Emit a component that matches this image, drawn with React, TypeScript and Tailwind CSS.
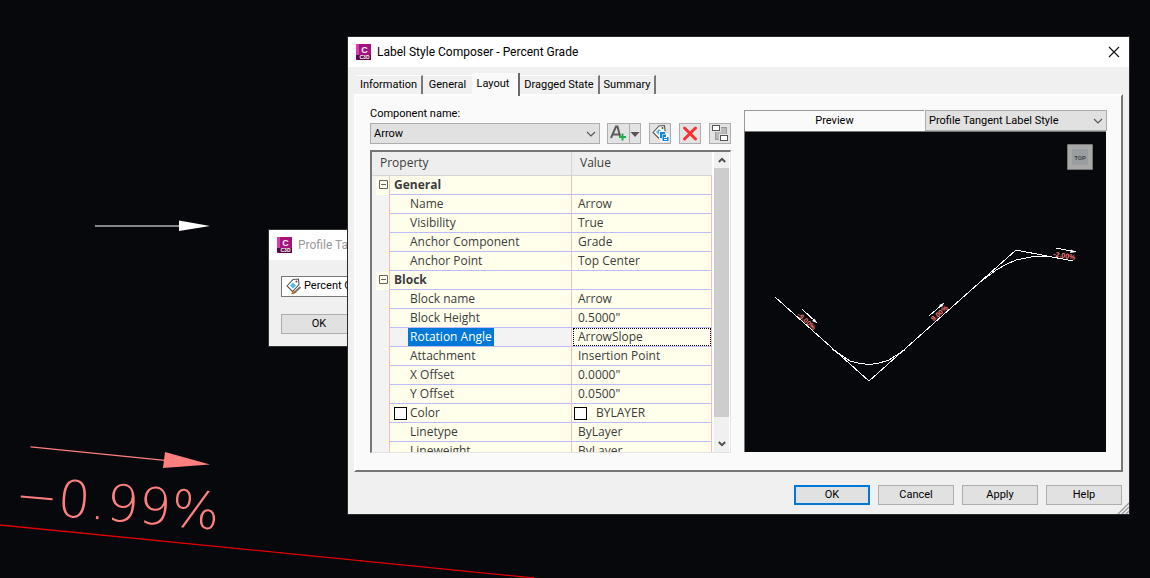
import type { ReactNode } from "react";

type Row = {
  name: string;
  value?: string;
  group?: boolean;
  swatch?: boolean;
  selected?: boolean;
};

const rows: Row[] = [
  { name: "General", group: true },
  { name: "Name", value: "Arrow" },
  { name: "Visibility", value: "True" },
  { name: "Anchor Component", value: "Grade" },
  { name: "Anchor Point", value: "Top Center" },
  { name: "Block", group: true },
  { name: "Block name", value: "Arrow" },
  { name: "Block Height", value: '0.5000"' },
  { name: "Rotation Angle", value: "ArrowSlope", selected: true },
  { name: "Attachment", value: "Insertion Point" },
  { name: "X Offset", value: '0.0000"' },
  { name: "Y Offset", value: '0.0500"' },
  { name: "Color", value: "BYLAYER", swatch: true },
  { name: "Linetype", value: "ByLayer" },
  { name: "Lineweight", value: "ByLayer" },
];

const tabs = [
  { label: "Information", width: "w-[67px]" },
  { label: "General", width: "w-[49px]" },
  { label: "Layout", width: "w-[48px]", active: true },
  { label: "Dragged State", width: "w-[80px]" },
  { label: "Summary", width: "w-[56px]" },
];

function AppIcon() {
  return (
    <svg width="16" height="16" viewBox="0 0 16 16" className="shrink-0" aria-hidden="true">
      <rect width="15" height="16" fill="#a8127d" />
      <path d="M0 0H3V11H0Z" fill="#d83cae" />
      <path d="M0 11H15V16H2L0 14Z" fill="#5f0546" />
      <text x="8.5" y="8.5" textAnchor="middle" fontFamily="Liberation Sans" fontSize="9" fontWeight="700" fill="#fff">C</text>
      <text x="8.5" y="15.2" textAnchor="middle" fontFamily="Liberation Sans" fontSize="5" fontWeight="700" fill="#fff">C3D</text>
    </svg>
  );
}

function Chevron() {
  return (
    <svg width="10" height="6" viewBox="0 0 10 6" className="pointer-events-none absolute right-1 top-2" aria-hidden="true">
      <path d="M1 1L5 5L9 1" fill="none" stroke="#555" strokeWidth="1.1" />
    </svg>
  );
}

function Combo({ label, id, value }: { label?: string; id: string; value: string }) {
  return (
    <div className="relative">
      <select
        id={id}
        aria-label={label}
        className="block h-[21px] w-full appearance-none border border-[#adadad] bg-[#e1e1e1] pl-[3px] pr-4 pt-px text-[11px] text-black"
      >
        <option>{value}</option>
      </select>
      <Chevron />
    </div>
  );
}

function ToolButton({ label, children, wide }: { label: string; children: ReactNode; wide?: boolean }) {
  return (
    <button
      aria-label={label}
      className={`flex h-[21px] items-center justify-center border border-[#adadad] bg-[#e3e3e3] ${wide ? "w-[34px]" : "w-[22px]"}`}
    >
      {children}
    </button>
  );
}

function PushButton({ children, primary }: { children: ReactNode; primary?: boolean }) {
  return (
    <button
      className={`flex h-5 w-[76px] items-center justify-center bg-[#e1e1e1] text-[11px] ${
        primary ? "border-2 border-[#0078d7]" : "border border-[#adadad]"
      }`}
    >
      {children}
    </button>
  );
}

function Toolbar() {
  return (
    <div className="flex gap-2">
      <ToolButton label="Create component" wide>
        <svg width="32" height="19" viewBox="0 0 32 19" aria-hidden="true">
          <path d="M3 14L8 2.5H9.5L12 12M5 10.500H11" fill="none" stroke="#5c5c5c" strokeWidth="2" />
          <path d="M11 13H18M14.5 9.500V16.500" stroke="#1fae4c" strokeWidth="2" />
          <path d="M21.5 0V19" stroke="#adadad" />
          <path d="M22.5 8H31.5L27 13Z" fill="#555" />
        </svg>
      </ToolButton>
      <ToolButton label="Copy component">
        <svg width="20" height="19" viewBox="0 0 20 19" aria-hidden="true">
          <path d="M3 8.5L9 2L14.5 1.5L15 7L8.5 14Z" fill="#f8f8f8" stroke="#555" strokeWidth="1.1" />
          <path d="M6 8L9 5L12 8L9 11Z" fill="#55b4f0" />
          <circle cx="12.5" cy="4" r="1" fill="#555" />
          <path d="M9 7H15V9H17L19 11V18H11V15H9Z" fill="#f8f8f8" />
          <path d="M10 8H15V10H12V14H10ZM12.5 10.500H16V13H18.5V17H12.5Z" fill="#1085dc" />
          <path d="M14 13.500H17M14 15.500H17" stroke="#f8f8f8" />
        </svg>
      </ToolButton>
      <ToolButton label="Delete component">
        <svg width="20" height="19" viewBox="0 0 20 19" aria-hidden="true">
          <path d="M4.5 4L15.5 15M15.5 4L4.5 15" stroke="#fb3030" strokeWidth="3" strokeLinecap="round" />
        </svg>
      </ToolButton>
      <ToolButton label="Component draw order">
        <svg width="20" height="19" viewBox="0 0 20 19" aria-hidden="true">
          <rect x="5.5" y="3.5" width="11" height="12" fill="#b9b9b9" stroke="#999" />
          <rect x="1" y="0" width="10" height="8" fill="#e3e3e3" />
          <rect x="2.5" y="1.5" width="7" height="5" fill="#fff" stroke="#555" />
          <rect x="9" y="10" width="10" height="8" fill="#e3e3e3" />
          <rect x="10.5" y="11.5" width="7" height="5" fill="#fff" stroke="#555" />
        </svg>
      </ToolButton>
    </div>
  );
}

function PropertyRow({ row }: { row: Row }) {
  return (
    <tr className="h-[19px]">
      <td className="border-r border-[#fbbcbc] bg-[#f3f3f3] p-0">
        {row.group && (
          <button aria-label={`Collapse ${row.name}`} className="ml-1 flex h-[18px] w-[13px] bg-[#ffffec] pl-[3px] pt-[3px]">
            <svg width="9" height="9" viewBox="0 0 9 9" aria-hidden="true">
              <path d="M.5 .5H8.5V8.5H.5ZM2 4.5H7" fill="none" stroke="#666" />
            </svg>
          </button>
        )}
      </td>
      <td className={`border-b border-r border-b-[#bcbcf8] border-r-[#fbbcbc] p-0 ${row.selected ? "bg-[#f3f3f3]" : "bg-[#ffffec]"}`}>
        <div className="flex h-[18px] items-center">
          {row.group && <span className="pl-1 font-bold">{row.name}</span>}
          {row.selected && <span className="ml-[18px] h-[18px] bg-[#0078d7] px-[2px] leading-[18px] text-white">{row.name}</span>}
          {row.swatch && <span className="ml-1 h-[13px] w-[13px] border border-black bg-white" />}
          {!row.group && !row.selected && <span className={row.swatch ? "pl-[3px]" : "pl-5"}>{row.name}</span>}
        </div>
      </td>
      <td className="border-b border-r border-b-[#bcbcf8] border-r-[#fbbcbc] bg-[#ffffec] p-0">
        <div className={`flex h-[18px] items-center ${row.selected ? "ml-px border border-dotted border-black pl-1" : "pl-[6px]"}`}>
          {row.swatch && <span className="-ml-[4px] mr-[9px] h-[13px] w-[13px] border border-black bg-white" />}
          {row.value}
        </div>
      </td>
    </tr>
  );
}

function PropertyGrid() {
  return (
    <div className="flex h-[303px] overflow-hidden border-b border-l-2 border-r border-t-2 border-b-[#e3e3e3] border-l-[#777] border-r-[#e3e3e3] border-t-[#777] bg-white">
      <div className="min-w-0 flex-1 overflow-hidden">
        <table className="w-full table-fixed border-separate border-spacing-0 font-['Open_Sans','Noto_Sans',sans-serif] text-[12px] leading-[18px] text-[#3c3c3c]">
          <colgroup>
            <col className="w-[18px]" />
            <col className="w-[182px]" />
            <col />
          </colgroup>
          <thead>
            <tr className="h-6 bg-[#eee] text-left">
              <th colSpan={2} className="border-b border-r border-[#d5d5d5] p-0 pb-px pl-2 font-normal">Property</th>
              <th className="border-b border-[#d5d5d5] p-0 pb-px pl-2 font-normal">Value</th>
            </tr>
          </thead>
          <tbody>
            {rows.map((row) => (
              <PropertyRow key={row.name} row={row} />
            ))}
          </tbody>
        </table>
      </div>
      {/* scrollbar */}
      <div className="ml-[2px] mr-px flex w-[15px] flex-col bg-[#f0f0f0]">
        <button aria-label="Scroll up" className="flex h-4 items-center justify-center">
          <svg width="8" height="6" viewBox="0 0 8 6" aria-hidden="true">
            <path d="M.8 5L4 1.8L7.2 5" fill="none" stroke="#505050" strokeWidth="2" />
          </svg>
        </button>
        <div className="h-[249px] bg-[#cdcdcd]" />
        <button aria-label="Scroll down" className="mt-auto flex h-[17px] items-center justify-center">
          <svg width="8" height="6" viewBox="0 0 8 6" aria-hidden="true">
            <path d="M.8 1L4 4.2L7.2 1" fill="none" stroke="#505050" strokeWidth="2" />
          </svg>
        </button>
      </div>
    </div>
  );
}

function Preview() {
  return (
    <div className="relative mr-px h-[321px] overflow-hidden border-l border-t border-[#777] bg-[#06080b]">
      <svg width="361" height="320" viewBox="745 132 361 320" className="block" aria-hidden="true">
        <g fill="none" stroke="#fff" shapeRendering="crispEdges">
          <path d="M775 297L869 381L1016 250L1073 261" />
          <path d="M832 349L850 361L860 363.5L869 364.5L877 363.5L888 360.5L905 350" />
          <path d="M979 283L996 270L1007 264L1016 260L1033 256.5L1050 256.5" />
          <path d="M802 309L817 323M929 316L944 303M1056 248L1076 252" />
        </g>
        <path d="M817 323L812 321L814.5 318.500ZM944 303L942 307L939 305ZM1076 252L1070 253L1071 249.500Z" fill="#fff" />
        <g fill="#ff7b7b" fontFamily="Liberation Sans" fontSize="7" fontWeight="700" textAnchor="middle">
          <text transform="translate(805 323) rotate(42)">-9.00%</text>
          <text transform="translate(941 315) rotate(-41)">9.00%</text>
          <text transform="translate(1064 258) rotate(9)">-2.00%</text>
        </g>
      </svg>
      <button className="absolute right-[13px] top-3 flex h-[26px] w-[26px] items-center justify-center rounded-[1px] border border-[#777] bg-[#a8a8a8]">
        <span className="flex h-4 w-4 items-center justify-center bg-[#9a9da0] text-[6px] font-bold text-[#44484c]">TOP</span>
      </button>
    </div>
  );
}

function DrawingArea() {
  return (
    <svg className="absolute inset-0 h-full w-full" aria-hidden="true">
      <path d="M95 226H180" stroke="#b0b0b0" strokeWidth="1.6" />
      <path d="M179 220.500L210 226L179 231Z" fill="#fff" />
      <path d="M30.500 446.800L165 460.300" stroke="#ff7f7f" strokeWidth="1.2" />
      <path d="M165 452L210 464.500L163 468Z" fill="#ff7f7f" />
      <text transform="translate(14 512) rotate(5)" fontFamily="DejaVu Sans Light, DejaVu Sans" fontSize="51" fontWeight="200" fill="#ff7f7f">
        −0.99%
      </text>
      <path d="M0 525L534 578" stroke="#e00000" strokeWidth="1.3" />
    </svg>
  );
}

function StylePicker() {
  return (
    <section className="absolute left-[268px] top-[229px] w-[250px] border border-[#333] bg-[#f0f0f0]">
      <header className="flex h-[30px] items-center gap-[5px] bg-white pl-2 text-[12px] text-[#999]">
        <AppIcon />
        <h2 className="whitespace-nowrap">Profile Tangent Label</h2>
      </header>
      <div className="flex flex-col items-start gap-[17px] px-3 pb-3 pt-4">
        <button className="flex h-[21px] w-full items-center gap-[2px] border border-[#777] bg-white pl-1 text-[11px]">
          <svg width="16" height="17" viewBox="0 0 16 17" className="shrink-0" aria-hidden="true">
            <path d="M1 8L7 1.500L12.500 1L13 6.500L6.500 13.500Z" fill="#fff" stroke="#555" strokeWidth="1.1" />
            <path d="M4 7.500L7 4.500L10 7.500L7 10.500Z" fill="#55b4f0" />
            <circle cx="10.500" cy="3.500" r="1" fill="#555" />
            <path d="M14.500 9L10 13" stroke="#777" strokeWidth="2" />
            <path d="M5 16Q7 12.500 10 12.500L11 14Q9 16.500 5 16Z" fill="#b07028" />
          </svg>
          Percent Grade
        </button>
        <PushButton>OK</PushButton>
      </div>
    </section>
  );
}

export default function App() {
  return (
    <main className="relative min-h-screen overflow-hidden bg-[#06080b] font-[Roboto,'Liberation_Sans',sans-serif] text-black">
      <DrawingArea />
      <StylePicker />

      <section className="absolute left-[347px] right-5 top-9 border border-[#2a2a2a] bg-[#f0f0f0]">
        {/* Title bar */}
        <header className="flex h-[30px] items-center gap-[5px] bg-white pl-2 pr-[9px] text-[12px]">
          <AppIcon />
          <h1>Label Style Composer - Percent Grade</h1>
          <button aria-label="Close" className="ml-auto">
            <svg width="12" height="12" viewBox="0 0 12 12" aria-hidden="true">
              <path d="M1 1L11 11M11 1L1 11" stroke="#111" strokeWidth="1.1" />
            </svg>
          </button>
        </header>

        <div className="px-[6px] pt-[6px]">
          {/* Tabs */}
          <div role="tablist" className="flex h-[21px] items-end pl-[2px]">
            {tabs.map((tab) => (
              <button
                key={tab.label}
                role="tab"
                aria-selected={!!tab.active}
                className={`whitespace-nowrap text-[11px] ${tab.width} ${
                  tab.active
                    ? "relative -mb-[2px] h-[23px] border-r-2 border-[#696969] bg-[#fafafa] pr-1"
                    : tab.label === "General"
                      ? "h-[19px] border-t border-white"
                      : "h-[19px] border-r-2 border-t border-r-[#777] border-t-white"
                }`}
              >
                {tab.label}
              </button>
            ))}
          </div>

          {/* Layout page */}
          <div className="flex gap-[13px] border-2 border-b-[#777] border-l-white border-r-[#777] border-t-white bg-[#fafafa] px-[14px] pb-[17px] pt-[13px]">
            <div className="w-[361px] shrink-0">
              <label htmlFor="component" className="-mt-[2px] block h-[14px] text-[11px] leading-[14px]">
                Component name:
              </label>
              <div className="mb-[6px] mt-[2px] flex gap-[7px]">
                <div className="flex-1">
                  <Combo id="component" value="Arrow" />
                </div>
                <Toolbar />
              </div>
              <PropertyGrid />
            </div>
            <div className="min-w-0 flex-1 pt-px">
              <div className="flex gap-px">
                <div className="flex h-[21px] flex-1 items-center justify-center border-l border-t border-[#999] text-[11px]">Preview</div>
                <div className="w-[182px]">
                  <Combo id="preview-style" label="Preview style" value="Profile Tangent Label Style" />
                </div>
              </div>
              <Preview />
            </div>
          </div>
        </div>

        <footer className="relative flex justify-end gap-2 pb-[9px] pr-[7px] pt-[13px]">
          <PushButton primary>OK</PushButton>
          <PushButton>Cancel</PushButton>
          <PushButton>Apply</PushButton>
          <PushButton>Help</PushButton>
          <svg width="12" height="12" viewBox="0 0 12 12" className="absolute bottom-0 right-0" aria-hidden="true">
            <path d="M1 12L12 1M5 12L12 5M9 12L12 9" stroke="#999" strokeWidth="1.3" />
          </svg>
        </footer>
      </section>
    </main>
  );
}
